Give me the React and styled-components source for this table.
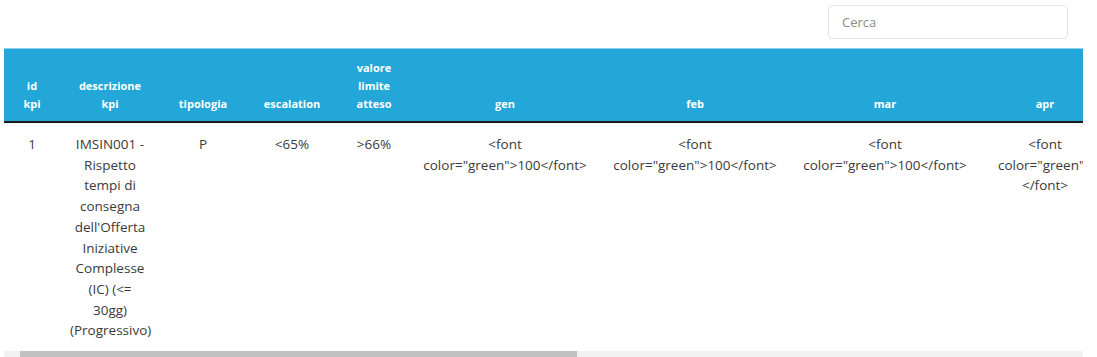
import React from "react"
import styled, { createGlobalStyle } from "styled-components"

const GlobalStyle = createGlobalStyle`
  html, body {
    margin: 0;
    padding: 0;
    background: #fff;
  }
  body {
    font-family: "Open Sans", "Noto Sans", sans-serif;
    color: #333;
  }
`

const Page = styled.div`
  padding: 5px 14px 0 4px;
`

const Toolbar = styled.div`
  display: flex;
  justify-content: flex-end;
  padding-right: 15px;
  margin-bottom: 9px;
`

const Search = styled.input`
  width: 240px;
  height: 34px;
  box-sizing: border-box;
  border: 1px solid #e3e3e3;
  border-radius: 4px;
  padding: 0 13px;
  font-family: "Open Sans", sans-serif;
  font-size: 13px;
  color: #555;
  outline: none;
  &::placeholder {
    color: #8a8a8a;
  }
`

const Scroller = styled.div`
  width: 100%;
  overflow: hidden;
`

const Table = styled.table`
  border-collapse: collapse;
  table-layout: fixed;
  width: 1106px;
`

const Head = styled.thead`
  background: #22a7d8;
  border-top: 1px solid #8fd0ea;
  border-bottom: 2px solid #1b1b1b;
`

const Th = styled.th`
  box-sizing: border-box;
  width: ${p => p.w}px;
  padding: 10px 6px 8px;
  vertical-align: bottom;
  text-align: center;
  color: #fff;
  font-size: 11px;
  font-weight: 700;
  line-height: 18px;
`

const Td = styled.td`
  box-sizing: border-box;
  padding: 11px ${p => (p.narrow ? 10 : 8)}px 9px;
  vertical-align: top;
  text-align: center;
  font-size: 13.5px;
  line-height: 20.7px;
  color: #3a3a3a;
`

// finto scrollbar orizzontale (headless non lo disegna)
const Track = styled.div`
  display: flex;
  height: 17px;
  margin-top: 1px;
  background: #f1f1f1;
  padding-left: 16px;
`

const Thumb = styled.div`
  width: ${p => p.w}px;
  height: 100%;
  background: #c1c1c1;
`

const columns = [
  { w: 56, label: ["id", "kpi"] },
  { w: 100, label: ["descrizione", "kpi"] },
  { w: 86, label: ["tipologia"] },
  { w: 92, label: ["escalation"] },
  { w: 72, label: ["valore", "limite", "atteso"] },
  { w: 190, label: ["gen"] },
  { w: 190, label: ["feb"] },
  { w: 190, label: ["mar"] },
  { w: 130, label: ["apr"] },
]

const row = [
  "1",
  "IMSIN001 - Rispetto tempi di consegna dell'Offerta Iniziative Complesse (IC) (<= 30gg) (Progressivo)",
  "P",
  "<65%",
  ">66%",
  '<font color="green">100</font>',
  '<font color="green">100</font>',
  '<font color="green">100</font>',
  '<font color="green"></font>',
]

export default function App() {
  return (
    <Page>
      <GlobalStyle />
      <Toolbar>
        <Search placeholder="Cerca" />
      </Toolbar>
      <Scroller>
        <Table>
          <Head>
            <tr>
              {columns.map((c, i) => (
                <Th key={i} w={c.w}>
                  {c.label.map((l, j) => (
                    <React.Fragment key={j}>
                      {j > 0 && <br />}
                      {l}
                    </React.Fragment>
                  ))}
                </Th>
              ))}
            </tr>
          </Head>
          <tbody>
            <tr>
              {row.map((v, i) => (
                <Td key={i} narrow={i === 1}>{v}</Td>
              ))}
            </tr>
          </tbody>
        </Table>
      </Scroller>
      <Track>
        <Thumb w={557} />
      </Track>
    </Page>
  )
}
